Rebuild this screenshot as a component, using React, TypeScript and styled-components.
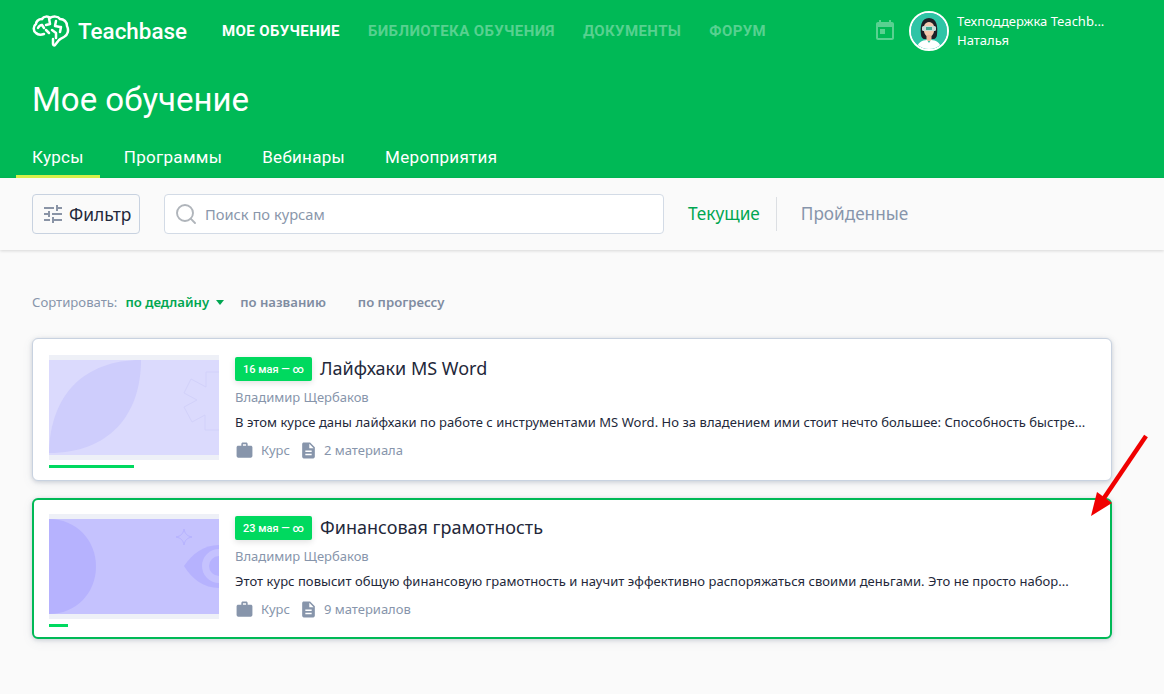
import React from 'react';
import styled, { createGlobalStyle } from 'styled-components';
import { MdToday, MdTune, MdWork, MdDescription } from 'react-icons/md';
import { Search } from 'lucide-react';

const GlobalStyle = createGlobalStyle`
  html, body {
    margin: 0;
    padding: 0;
    background: #fafafa;
    font-family: 'Noto Sans', 'Open Sans', sans-serif;
    overflow: hidden;
  }
  * { box-sizing: border-box; }
`;

const Page = styled('div')`
  position: relative;
  width: 1164px;
  height: 694px;
  overflow: hidden;
`;

const Header = styled('header')`
  height: 178px;
  background: #00b956;
  color: white;
  display: flex;
  flex-direction: column;
`;

const TopBar = styled('div')`
  height: 60px;
  padding: 2px 0 0 32px;
  display: flex;
  align-items: center;
`;

const Logo = styled('div')`
  width: 190px;
  display: flex;
  align-items: center;
  gap: 8px;
  font-family: Roboto, sans-serif;
  font-size: 22.4px;
  font-weight: 500;
`;

const Nav = styled('nav')`
  display: flex;
  gap: 28px;
  flex: 1;
`;

const NavLink = styled('a')<{ $active?: boolean }>`
  font-family: Roboto, sans-serif;
  font-size: 15px;
  font-weight: 700;
  letter-spacing: 0.4px;
  color: ${({ $active }) => ($active ? 'white' : 'rgba(255, 255, 255, 0.35)')};
`;

const UserBlock = styled('div')`
  display: flex;
  align-items: center;
  width: 291px;
  color: rgba(255, 255, 255, 0.35);
`;

const Avatar = styled('div')`
  width: 40px;
  height: 40px;
  margin-left: 12px;
  margin-right: 8px;
  border-radius: 50%;
  border: 2px solid white;
  overflow: hidden;
  background: #2fc4a6;
`;

const UserText = styled('div')`
  color: white;
  font-size: 13px;
  line-height: 19px;
`;

const PageTitle = styled('h1')`
  margin: 0;
  padding: 21px 0 0 32px;
  font-family: Roboto, sans-serif;
  font-size: 33px;
  font-weight: 400;
  line-height: 38px;
`;

const Tabs = styled('div')`
  margin-top: 20px;
  padding-left: 16px;
  display: flex;
  flex: 1;
`;

const Tab = styled('div')<{ $active?: boolean }>`
  padding: 0 16px;
  margin-right: 8px;
  font-family: Roboto, sans-serif;
  font-size: 17px;
  line-height: 36px;
  letter-spacing: 0.3px;
  border-bottom: 3px solid ${({ $active }) => ($active ? '#d5f04a' : 'transparent')};
`;

const Toolbar = styled('div')`
  height: 72px;
  padding: 16px 32px;
  display: flex;
  background: #fafafa;
  box-shadow: 0 1px 3px rgba(0, 0, 0, 0.14);
`;

const FilterButton = styled('button')`
  width: 108px;
  height: 40px;
  padding: 0 0 0 8px;
  display: flex;
  align-items: center;
  gap: 4px;
  background: transparent;
  border: 1px solid #c8d2e0;
  border-radius: 4px;
  color: #23283a;
  font-family: inherit;
  font-size: 17.4px;
`;

const SearchBox = styled('div')`
  width: 500px;
  height: 40px;
  margin-left: 24px;
  padding-left: 9px;
  display: flex;
  align-items: center;
  gap: 7px;
  background: white;
  border: 1px solid #d3dbe6;
  border-radius: 4px;
  color: #8a97ab;
  font-size: 14.7px;
`;

const StatusTabs = styled('div')`
  margin-left: 24px;
  display: flex;
  align-items: center;
  font-size: 17.2px;
`;

const Status = styled('span')<{ $active?: boolean }>`
  color: ${({ $active }) => ($active ? '#00a651' : '#8795ab')};
  padding: ${({ $active }) => ($active ? '0 16px 0 0' : '0 0 0 24px')};
  line-height: 34px;
  border-right: ${({ $active }) => ($active ? '1px solid #dcdfe3' : 'none')};
`;

const Content = styled('main')`
  padding: 43px 52px 0 32px;
`;

const SortRow = styled('div')`
  display: flex;
  align-items: center;
  height: 18px;
  margin-bottom: 27px;
  font-size: 13.15px;
  color: #8795ab;
`;

const SortLabel = styled('span')`
  margin-right: 8px;
`;

const SortItem = styled('span')<{ $active?: boolean }>`
  font-weight: 600;
  margin-right: 32px;
  color: ${({ $active }) => ($active ? '#00a651' : '#7f8ca1')};
`;

const SortCaret = styled('i')`
  width: 0;
  height: 0;
  margin: 1px 16px 0 -25px;
  border-left: 4px solid transparent;
  border-right: 4px solid transparent;
  border-top: 5px solid #00a651;
`;

const Card = styled('article')<{ $selected?: boolean }>`
  display: flex;
  margin-bottom: 17px;
  background: white;
  border-radius: 6px;
  border: ${({ $selected }) => ($selected ? '2px solid #00b956' : '1px solid #c8d2e0')};
  padding: ${({ $selected }) => ($selected ? '14px 15px 10px' : '16px 16px 12px')};
  box-shadow: 0 1px 4px rgba(90, 105, 130, 0.28), 0 3px 12px rgba(90, 105, 130, 0.08);
`;

const ThumbColumn = styled('div')`
  width: 170px;
  margin-right: 16px;
  flex-shrink: 0;
`;

const Thumb = styled('svg')`
  display: block;
  width: 170px;
  height: 105px;
`;

const Progress = styled('div')`
  height: 3px;
  margin-top: 5px;
  background: #00d95f;
`;

const CardBody = styled('div')`
  min-width: 0;
  flex: 1;
  padding-top: 2px;
`;

const TitleRow = styled('div')`
  display: flex;
  align-items: center;
  gap: 8px;
  height: 24px;
`;

const DateBadge = styled('span')`
  width: 77px;
  height: 24px;
  display: flex;
  align-items: center;
  justify-content: center;
  background: #00d95f;
  border-radius: 2px;
  color: white;
  font-family: Roboto, sans-serif;
  font-size: 11px;
  font-weight: 500;
  box-shadow: 0 2px 6px rgba(0, 0, 0, 0.12);
`;

const CardTitle = styled('h2')`
  margin: 0;
  padding-bottom: 3px;
  color: #23283a;
  font-size: 18px;
  font-weight: 400;
`;

const Author = styled('div')`
  margin-top: 7px;
  color: #8795ab;
  font-size: 13px;
  line-height: 18px;
`;

const Description = styled('div')`
  margin-top: 7px;
  color: #23283a;
  font-size: 13px;
  letter-spacing: 0.04px;
  line-height: 18px;
  white-space: nowrap;
`;

const Meta = styled('div')`
  margin-top: 9px;
  display: flex;
  align-items: center;
  color: #8795ab;
  font-size: 13px;
  line-height: 20px;

  svg {
    color: #8795ab;
  }
`;

const MetaKind = styled('span')`
  margin: 0 9px 0 7px;
`;

const MetaCount = styled('span')`
  margin-left: 6px;
`;

const RedArrow = styled('svg')`
  position: absolute;
  left: 1085px;
  top: 430px;
`;

const BrainLogo = () => (
  <svg width="38" height="32" viewBox="0 0 38 32" fill="none" stroke="white" strokeWidth="2.5" strokeLinecap="round" strokeLinejoin="round">
    <path d="M10 4c2-3 6-3 8-1 3-2 8-2 10 1 4 0 7 3 7 7 2 4 1 9-3 11-2 1-4 2-5 3l-4 5c-1 1-2 0-2-1v-5" />
    <path d="M10 4C6 4 4 7 4 9c-3 2-3 7 0 9 2 2 5 2 8 1" />
    <path d="M10 10c-2 0-3 1-4 3M10 10l2 3M17 3l1 6-4 1M24 6l-1 5 5 1M29 12l-1 5M20 15l4 3 0 5M14 15l3 3" />
  </svg>
);

const AvatarArt = () => (
  <svg width="36" height="36" viewBox="0 0 36 36">
    <rect width="36" height="36" fill="#2fc4a6" />
    <path d="M10 22c-1-8 0-17 8-17s9 9 8 17c0 2-2 4-3 4H13c-1 0-3-2-3-4z" fill="#1d1f26" />
    <path d="M13 13c1-3 3-4 5-4s4 1 5 4v5c0 3-3 6-5 6s-5-3-5-6z" fill="#f3c9ae" />
    <rect x="15.5" y="22" width="5" height="6" fill="#ecb99c" />
    <path d="M6 36c0-6 5-9 10-9l2 3 2-3c5 0 10 3 10 9z" fill="#fff" />
    <rect x="11" y="13" width="14" height="5" rx="1.5" fill="#c9ded8" />
    <rect x="15" y="14" width="6" height="3" fill="#3ea890" />
  </svg>
);

const LeafThumb = () => (
  <Thumb viewBox="0 0 170 105">
    <rect width="170" height="105" fill="#eef0f7" />
    <rect y="5" width="170" height="95" fill="#dbdafd" />
    <path d="M0 98C1 40 35 5 92 5 92 60 60 98 0 98z" fill="#cecdfc" />
    <path d="M170 17h-13v15l-15-8-7 14 13 7-13 7 8 15 13-7v15h14" fill="none" stroke="#d2d1fa" strokeWidth="1" />
  </Thumb>
);

const EyeThumb = () => (
  <Thumb viewBox="0 0 170 105">
    <rect width="170" height="105" fill="#eef0f7" />
    <rect y="5" width="170" height="95" fill="#c5c2fe" />
    <path d="M0 5c27 0 47 21 47 47.500S27 100 0 100z" fill="#b6b2fe" />
    <path d="M170 31c-15 0-27 9-35 21 8 13 20 22 35 22z" fill="#b6b2fe" />
    <circle cx="170" cy="52" r="17" fill="#c5c2fe" />
    <circle cx="170" cy="52" r="10" fill="#b6b2fe" />
    <path d="M135 15c1 5 3 7 8 8-5 1-7 3-8 8-1-5-3-7-8-8 5-1 7-3 8-8z" fill="none" stroke="#b6b2fe" strokeWidth="1" />
  </Thumb>
);

const courses = [
  {
    date: '16 мая — ∞',
    title: 'Лайфхаки MS Word',
    text: 'В этом курсе даны лайфхаки по работе с инструментами MS Word. Но за владением ими стоит нечто большее: Способность быстре...',
    count: '2 материала',
    progress: 85,
    thumb: <LeafThumb />,
  },
  {
    date: '23 мая — ∞',
    title: 'Финансовая грамотность',
    text: 'Этот курс повысит общую финансовую грамотность и научит эффективно распоряжаться своими деньгами. Это не просто набор...',
    count: '9 материалов',
    progress: 19,
    thumb: <EyeThumb />,
    selected: true,
  },
];

export default function App() {
  return (
    <Page>
      <GlobalStyle />
      <Header>
        <TopBar>
          <Logo>
            <BrainLogo />
            Teachbase
          </Logo>
          <Nav>
            <NavLink $active>МОЕ ОБУЧЕНИЕ</NavLink>
            <NavLink>БИБЛИОТЕКА ОБУЧЕНИЯ</NavLink>
            <NavLink>ДОКУМЕНТЫ</NavLink>
            <NavLink>ФОРУМ</NavLink>
          </Nav>
          <UserBlock>
            <MdToday size={24} />
            <Avatar><AvatarArt /></Avatar>
            <UserText>
              Техподдержка Teachb...
              <br />
              Наталья
            </UserText>
          </UserBlock>
        </TopBar>
        <PageTitle>Мое обучение</PageTitle>
        <Tabs>
          <Tab $active>Курсы</Tab>
          <Tab>Программы</Tab>
          <Tab>Вебинары</Tab>
          <Tab>Мероприятия</Tab>
        </Tabs>
      </Header>
      <Toolbar>
        <FilterButton>
          <MdTune size={24} color="#8a94a6" />
          Фильтр
        </FilterButton>
        <SearchBox>
          <Search size={24} color="#b0b5bb" strokeWidth={1.9} />
          Поиск по курсам
        </SearchBox>
        <StatusTabs>
          <Status $active>Текущие</Status>
          <Status>Пройденные</Status>
        </StatusTabs>
      </Toolbar>
      <Content>
        <SortRow>
          <SortLabel>Сортировать:</SortLabel>
          <SortItem $active>по дедлайну</SortItem>
          <SortCaret />
          <SortItem>по названию</SortItem>
          <SortItem>по прогрессу</SortItem>
        </SortRow>
        {courses.map((course) => (
          <Card key={course.title} $selected={course.selected}>
            <ThumbColumn>
              {course.thumb}
              <Progress style={{ width: course.progress }} />
            </ThumbColumn>
            <CardBody>
              <TitleRow>
                <DateBadge>{course.date}</DateBadge>
                <CardTitle>{course.title}</CardTitle>
              </TitleRow>
              <Author>Владимир Щербаков</Author>
              <Description>{course.text}</Description>
              <Meta>
                <MdWork size={19} />
                <MetaKind>Курс</MetaKind>
                <MdDescription size={19} />
                <MetaCount>{course.count}</MetaCount>
              </Meta>
            </CardBody>
          </Card>
        ))}
      </Content>
      <RedArrow width="70" height="95" viewBox="0 0 70 95">
        <path d="M61 6 19 68" stroke="#f00000" strokeWidth="4.5" fill="none" />
        <path d="M6 86 12 62 27 73z" fill="#f00000" />
      </RedArrow>
    </Page>
  );
}
